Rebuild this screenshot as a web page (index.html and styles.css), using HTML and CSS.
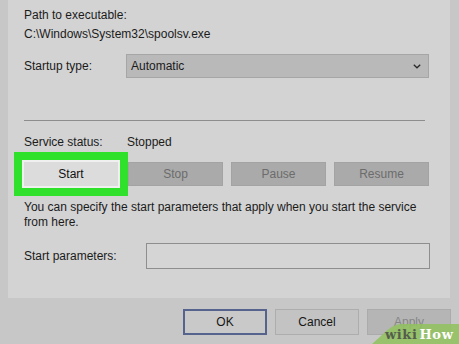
FILE: index.html
```html
<!DOCTYPE html>
<html>
<head>
<meta charset="utf-8">
<link rel="stylesheet" href="styles.css">
</head>
<body>
<div class="screen">
  <div class="panel">
    <p class="line">Path to executable:</p>
    <p class="line path">C:\Windows\System32\spoolsv.exe</p>
    <div class="row startup">
      <span class="label label-startup">Startup type:</span>
      <div class="combo">
        <span class="combo-text">Automatic</span>
        <svg class="chev" width="8" height="5" viewBox="0 0 8 5"><polyline points="0.8,0.8 4,3.8 7.2,0.8" fill="none" stroke="#2a2a2a" stroke-width="1.3"/></svg>
      </div>
    </div>
    <div class="sep"></div>
    <div class="row status">
      <span class="label label-status">Service status:</span>
      <span class="line">Stopped</span>
    </div>
    <div class="btnrow">
      <button class="btn start">Start</button>
      <button class="btn dis">Stop</button>
      <button class="btn dis">Pause</button>
      <button class="btn dis">Resume</button>
    </div>
    <p class="desc">You can specify the start parameters that apply when you start the service<br>from here.</p>
    <div class="row params">
      <span class="label label-params">Start parameters:</span>
      <div class="input"></div>
    </div>
  </div>
  <div class="footer">
    <button class="fbtn ok">OK</button>
    <button class="fbtn cancel">Cancel</button>
    <button class="fbtn apply">Apply</button>
  </div>
  <div class="wm"><span class="wm-wiki">wiki</span><span class="wm-how">How</span></div>
</div>
</body>
</html>
```
FILE: styles.css
```css
html, body {
  margin: 0;
  padding: 0;
}
body {
  width: 459px;
  height: 344px;
  overflow: hidden;
  background: #c7c7c7;
  font-family: "Liberation Sans", Arial, sans-serif;
  font-size: 12px;
  color: #1b1b1b;
}
.screen {
  position: relative;
  width: 459px;
  height: 344px;
  overflow: hidden;
}
.panel {
  margin-left: 8px;
  width: 442px;
  height: 298px;
  box-sizing: border-box;
  padding: 8px 0 0 16px;
  background: #d3d3d3;
}
.line, .desc {
  margin: 0;
  line-height: 15px;
}
.path {
  margin-top: 4px;
}
.row {
  display: flex;
  align-items: center;
  line-height: 15px;
}
.startup {
  margin-top: 12px;
}
.label-startup { width: 102px; }
.label-status { width: 103px; }
.label-params { width: 122px; }
.combo {
  width: 303px;
  height: 24px;
  box-sizing: border-box;
  border: 1px solid #a6a6a6;
  background: #b9b9b9;
  display: flex;
  align-items: center;
  justify-content: space-between;
  padding: 0 7px 0 4px;
}
.chev {
  display: block;
}
.sep {
  margin-top: 42px;
  width: 401px;
  height: 1px;
  background: #8d8d8d;
}
.status {
  margin-top: 14px;
}
.btnrow {
  margin-top: 10px;
  margin-left: -2px;
  display: flex;
  align-items: center;
  gap: 8px;
}
.btn {
  font-family: "Liberation Sans", Arial, sans-serif;
  font-size: 12px;
  width: 95px;
  height: 24px;
  box-sizing: border-box;
  padding: 0;
  margin: 0;
}
.btn.start {
  width: 98px;
  height: 28px;
  background: #dcdcdc;
  border: 2px solid #f0f0f0;
  color: #111;
  outline: 8px solid #2fe12a;
}
.btn.dis {
  background: #aaaaaa;
  border: 1px solid #a3a3a3;
  color: #6c6c6c;
}
.desc {
  margin-top: 12px;
}
.params {
  margin-top: 13px;
}
.input {
  width: 284px;
  height: 26px;
  box-sizing: border-box;
  border: 1px solid #8e8e8e;
  background: #d5d5d5;
}
.footer {
  margin-top: 11px;
  display: flex;
  justify-content: flex-end;
  gap: 8px;
  padding-right: 8px;
}
.fbtn {
  font-family: "Liberation Sans", Arial, sans-serif;
  font-size: 12px;
  width: 84px;
  height: 26px;
  box-sizing: border-box;
  padding: 0;
  margin: 0;
  color: #161616;
}
.fbtn.ok {
  background: #c9c9c9;
  border: 2px solid #56638c;
}
.fbtn.cancel {
  background: #c3c3c3;
  border: 1px solid #adadad;
}
.fbtn.apply {
  background: #b5b5b5;
  border: 1px solid #ababab;
  color: #858585;
}
.wm {
  position: absolute;
  left: 372px;
  top: 324px;
  width: 87px;
  height: 20px;
  box-sizing: border-box;
  padding-left: 13px;
  white-space: nowrap;
  font-family: "DejaVu Serif", "Liberation Serif", serif;
  font-weight: bold;
  font-size: 13px;
  line-height: 22px;
  letter-spacing: 0.6px;
}
.wm::before {
  content: "";
  position: absolute;
  left: 0;
  top: 0;
  width: 120px;
  height: 20px;
  background: rgba(146, 194, 96, 0.88);
  border-top-left-radius: 6px;
  transform: skewX(-48deg);
  transform-origin: bottom left;
}
.wm-wiki, .wm-how {
  position: relative;
}
.wm-wiki { color: #555d4b; }
.wm-how { color: #ffffff; margin-left: 2px; }
```
